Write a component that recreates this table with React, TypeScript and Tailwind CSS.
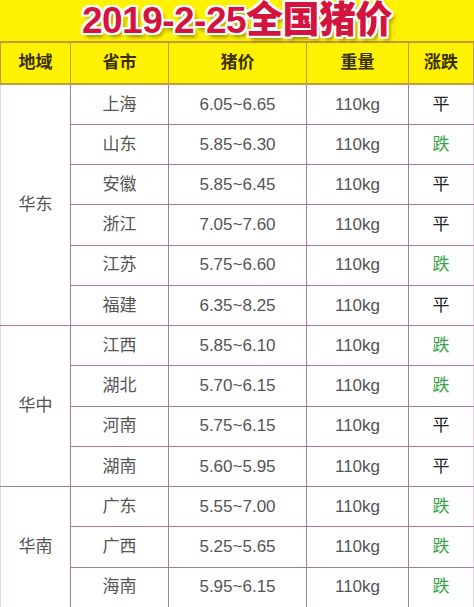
import React from "react";

type Row = {
  province: string;
  price: string;
  trend: "平" | "跌";
};

type Group = {
  region: string;
  rows: Row[];
};

const groups: Group[] = [
  {
    region: "华东",
    rows: [
      { province: "上海", price: "6.05~6.65", trend: "平" },
      { province: "山东", price: "5.85~6.30", trend: "跌" },
      { province: "安徽", price: "5.85~6.45", trend: "平" },
      { province: "浙江", price: "7.05~7.60", trend: "平" },
      { province: "江苏", price: "5.75~6.60", trend: "跌" },
      { province: "福建", price: "6.35~8.25", trend: "平" },
    ],
  },
  {
    region: "华中",
    rows: [
      { province: "江西", price: "5.85~6.10", trend: "跌" },
      { province: "湖北", price: "5.70~6.15", trend: "跌" },
      { province: "河南", price: "5.75~6.15", trend: "平" },
      { province: "湖南", price: "5.60~5.95", trend: "平" },
    ],
  },
  {
    region: "华南",
    rows: [
      { province: "广东", price: "5.55~7.00", trend: "跌" },
      { province: "广西", price: "5.25~5.65", trend: "跌" },
      { province: "海南", price: "5.95~6.15", trend: "跌" },
    ],
  },
];

const cell = "border border-[#a77a9c] text-center align-middle";

export default function App() {
  return (
    <div className="w-[474px] h-[607px] overflow-hidden bg-white font-['Liberation_Sans','Noto_Sans_CJK_SC',sans-serif]">
      <div className="h-[43px] bg-[#fff200] border-b-2 border-[#c59a3c] flex items-center justify-center">
        <h1 className="text-[37px] leading-none font-black text-[#d4143f] tracking-[-0.5px] [text-shadow:-2px_-2px_0_#fff,2px_-2px_0_#fff,-2px_2px_0_#fff,2px_2px_0_#fff,0_-2px_0_#fff,0_2px_0_#fff,-2px_0_0_#fff,2px_0_0_#fff,3px_4px_4px_rgba(0,0,0,0.45)]">
          2019-2-25全国猪价
        </h1>
      </div>
      <table className="w-full table-fixed border-collapse text-[17px]">
        <colgroup>
          <col className="w-[70px]" />
          <col className="w-[98px]" />
          <col className="w-[138px]" />
          <col className="w-[102px]" />
          <col />
        </colgroup>
        <thead>
          <tr className="h-[41px] bg-[#fff200] text-[#3a3000] font-bold text-[17px]">
            {["地域", "省市", "猪价", "重量", "涨跌"].map((h) => (
              <th
                key={h}
                className="border-x border-b-2 border-[#c59a3c] text-center align-middle font-bold"
              >
                {h}
              </th>
            ))}
          </tr>
        </thead>
        <tbody className="text-[#555]">
          {groups.map((g) =>
            g.rows.map((r, i) => (
              <tr key={r.province} className="h-[40.25px]">
                {i === 0 && (
                  <td rowSpan={g.rows.length} className={`${cell} border-l-[#e6d6ea]`}>
                    {g.region}
                  </td>
                )}
                <td className={cell}>{r.province}</td>
                <td className={cell}>{r.price}</td>
                <td className={cell}>110kg</td>
                <td
                  className={`${cell} border-r-[#e6d6ea] ${
                    r.trend === "跌" ? "text-[#3aa54a]" : "text-[#222]"
                  }`}
                >
                  {r.trend}
                </td>
              </tr>
            ))
          )}
        </tbody>
      </table>
    </div>
  );
}
